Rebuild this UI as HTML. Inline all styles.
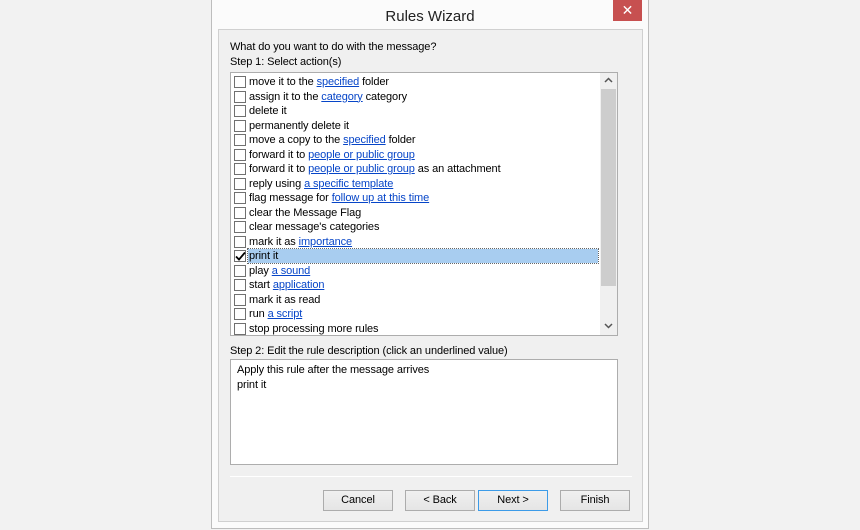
<!DOCTYPE html>
<html><head><style>
*{margin:0;padding:0;box-sizing:border-box}
body{width:860px;height:530px;background:#f2f2f2;font-family:"Liberation Sans",sans-serif;font-size:11px;letter-spacing:-0.1px;color:#000;position:relative;overflow:hidden}
.win{position:absolute;left:211px;top:-1px;width:438px;height:530px;background:#fbfbfb;border:1px solid #bdbdbd}
.title{position:absolute;left:0;width:100%;top:8px;text-align:center;font-size:15px;letter-spacing:0;color:#222}
.close{position:absolute;left:401px;top:0;width:29px;height:21px;background:#c75050;color:#fff;text-align:center;font-size:14px;line-height:20px}
.panel{position:absolute;left:6px;top:29px;width:425px;height:493px;background:#f0f0f0;border:1px solid #d0d0d0}
.abs{position:absolute}
.list{position:absolute;left:11px;top:42px;width:388px;height:264px;background:#fff;border:1px solid #adadad}
.row{position:absolute;left:2px;height:14px;width:366px;line-height:14px;white-space:nowrap}
.cb{position:absolute;left:1px;top:2px;width:12px;height:12px;border:1px solid #707070;background:#fff}
.t{position:absolute;left:16px;top:1px}
a{color:#0645c8;text-decoration:underline}
.sel{background:#a8cdf0;outline:1px dotted #666}
.sb{position:absolute;right:0;top:0;width:17px;height:262px;background:#f0f0f0}
.thumb{position:absolute;left:1px;top:16px;width:15px;height:197px;background:#cdcdcd}
.desc{position:absolute;left:11px;top:329px;width:388px;height:106px;background:#fff;border:1px solid #adadad;padding:3px 6px;line-height:14.5px}
.sep{position:absolute;left:11px;top:446px;width:402px;height:1px;background:#a0a0a0;border-bottom:1px solid #fff}
.btn{position:absolute;top:460px;width:70px;height:21px;border:1px solid #acacac;background:linear-gradient(#f0f0f0,#e5e5e5);text-align:center;line-height:19px}
</style></head><body>
<div class="win">
<div class="title">Rules Wizard</div>
<div class="close">✕</div>
<div class="panel">
<div class="abs" style="left:11px;top:11px">What do you want to do with the message?</div>
<div class="abs" style="left:11px;top:26px">Step 1: Select action(s)</div>
<div class="list">
<div class="row" style="top:1px"><div class="cb"></div><div class="t">move it to the <a>specified</a> folder</div></div>
<div class="row" style="top:15.5px"><div class="cb"></div><div class="t">assign it to the <a>category</a> category</div></div>
<div class="row" style="top:30px"><div class="cb"></div><div class="t">delete it</div></div>
<div class="row" style="top:44.5px"><div class="cb"></div><div class="t">permanently delete it</div></div>
<div class="row" style="top:59px"><div class="cb"></div><div class="t">move a copy to the <a>specified</a> folder</div></div>
<div class="row" style="top:73.5px"><div class="cb"></div><div class="t">forward it to <a>people or public group</a></div></div>
<div class="row" style="top:88px"><div class="cb"></div><div class="t">forward it to <a>people or public group</a> as an attachment</div></div>
<div class="row" style="top:102.5px"><div class="cb"></div><div class="t">reply using <a>a specific template</a></div></div>
<div class="row" style="top:117px"><div class="cb"></div><div class="t">flag message for <a>follow up at this time</a></div></div>
<div class="row" style="top:131.5px"><div class="cb"></div><div class="t">clear the Message Flag</div></div>
<div class="row" style="top:146px"><div class="cb"></div><div class="t">clear message's categories</div></div>
<div class="row" style="top:160.5px"><div class="cb"></div><div class="t">mark it as <a>importance</a></div></div>
<div class="row" style="top:175px"><div class="cb"></div><div class="t sel" style="width:350px;left:15px;padding-left:1px">print it</div><svg class="abs" style="left:2px;top:3px" width="11" height="11"><path d="M1 5.5 L4 8.5 L10 1.5" stroke="#000" stroke-width="1.8" fill="none"/></svg></div>
<div class="row" style="top:189.5px"><div class="cb"></div><div class="t">play <a>a sound</a></div></div>
<div class="row" style="top:204px"><div class="cb"></div><div class="t">start <a>application</a></div></div>
<div class="row" style="top:218.5px"><div class="cb"></div><div class="t">mark it as read</div></div>
<div class="row" style="top:233px"><div class="cb"></div><div class="t">run <a>a script</a></div></div>
<div class="row" style="top:247.5px"><div class="cb"></div><div class="t">stop processing more rules</div></div>
<div class="sb"><svg class="abs" style="left:4px;top:4px" width="9" height="6"><path d="M1 5 L4.5 1.5 L8 5" stroke="#555" stroke-width="1.5" fill="none"/></svg><div class="thumb"></div><svg class="abs" style="left:4px;top:250px" width="9" height="6"><path d="M1 1 L4.5 4.5 L8 1" stroke="#555" stroke-width="1.5" fill="none"/></svg></div>
</div>
<div class="abs" style="left:11px;top:315px">Step 2: Edit the rule description (click an underlined value)</div>
<div class="desc">Apply this rule after the message arrives<br>print it</div>
<div class="sep"></div>
<div class="btn" style="left:104px">Cancel</div>
<div class="btn" style="left:186px">&lt; Back</div>
<div class="btn" style="left:259px;border-color:#3c9be8">Next &gt;</div>
<div class="btn" style="left:341px">Finish</div>
</div>
</div>
</body></html>
